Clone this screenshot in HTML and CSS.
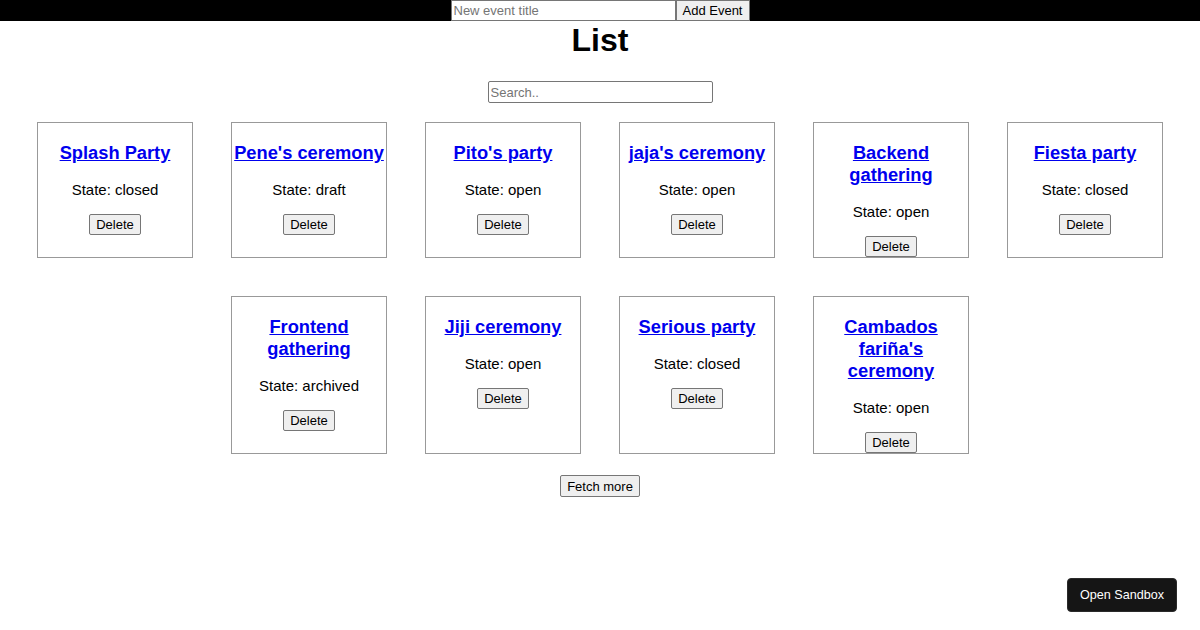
FILE: index.html
```html
<!DOCTYPE html>
<html lang="en">
<head>
<meta charset="utf-8">
<title>List</title>
<link rel="stylesheet" href="styles.css">
</head>
<body>
<div class="topbar">
  <input class="field" type="text" placeholder="New event title">
  <button class="btn">Add Event</button>
</div>
<h1 class="heading">List</h1>
<div class="search-row">
  <input class="field search" type="text" placeholder="Search..">
</div>
<div class="cards">
  <div class="card"><h3 class="title"><a href="#">Splash Party</a></h3><p class="state">State: closed</p><button class="btn del">Delete</button></div>
  <div class="card"><h3 class="title"><a href="#">Pene's ceremony</a></h3><p class="state">State: draft</p><button class="btn del">Delete</button></div>
  <div class="card"><h3 class="title"><a href="#">Pito's party</a></h3><p class="state">State: open</p><button class="btn del">Delete</button></div>
  <div class="card"><h3 class="title"><a href="#">jaja's ceremony</a></h3><p class="state">State: open</p><button class="btn del">Delete</button></div>
  <div class="card"><h3 class="title"><a href="#">Backend gathering</a></h3><p class="state">State: open</p><button class="btn del">Delete</button></div>
  <div class="card"><h3 class="title"><a href="#">Fiesta party</a></h3><p class="state">State: closed</p><button class="btn del">Delete</button></div>
  <div class="card"><h3 class="title"><a href="#">Frontend gathering</a></h3><p class="state">State: archived</p><button class="btn del">Delete</button></div>
  <div class="card"><h3 class="title"><a href="#">Jiji ceremony</a></h3><p class="state">State: open</p><button class="btn del">Delete</button></div>
  <div class="card"><h3 class="title"><a href="#">Serious party</a></h3><p class="state">State: closed</p><button class="btn del">Delete</button></div>
  <div class="card"><h3 class="title"><a href="#">Cambados fariña's ceremony</a></h3><p class="state">State: open</p><button class="btn del">Delete</button></div>
</div>
<div class="more-row">
  <button class="btn more">Fetch more</button>
</div>
<button class="sandbox">Open Sandbox</button>
</body>
</html>
```
FILE: styles.css
```css
html, body {
  margin: 0;
  padding: 0;
  background: #fff;
}
body {
  font-family: "Liberation Sans", Arial, sans-serif;
  color: #000;
}
.topbar {
  background: #000;
  height: 21px;
  display: flex;
  justify-content: center;
  align-items: stretch;
}
.field {
  box-sizing: border-box;
  width: 225px;
  height: 21px;
  margin: 0;
  padding: 1px 2px;
  border: 1px solid #767676;
  background: #fff;
  font-family: "Liberation Sans", Arial, sans-serif;
  font-size: 13px;
  color: #000;
}
.field::placeholder {
  color: #757575;
}
.btn {
  box-sizing: border-box;
  height: 21px;
  margin: 0;
  padding: 1px 6px;
  border: 1px solid #767676;
  border-radius: 2px;
  background: #efefef;
  font-family: "Liberation Sans", Arial, sans-serif;
  font-size: 13px;
  line-height: 15px;
  color: #000;
  white-space: nowrap;
}
.topbar .btn {
  border-radius: 0;
  padding: 1px 6px;
}
.heading {
  margin: 1px 0 22px;
  font-size: 32px;
  line-height: 37px;
  text-align: center;
}
.search-row {
  display: flex;
  justify-content: center;
}
.search-row .search {
  height: 22px;
  border-radius: 2px;
}
.cards {
  display: flex;
  flex-wrap: wrap;
  justify-content: center;
  margin: 0 18px;
}
.card {
  width: 154px;
  margin: 19px;
  border: 1px solid #999;
  display: flex;
  flex-direction: column;
  text-align: center;
}
.title {
  margin: 19px 0 17px;
  padding: 0 1px;
  font-size: 18.3px;
  line-height: 22px;
  font-weight: bold;
}
.title a {
  color: #0000ee;
  text-decoration: underline;
}
.state {
  margin: 0 0 15px;
  font-size: 15px;
  line-height: 18px;
}
.del {
  align-self: center;
}
.more-row {
  display: flex;
  justify-content: center;
  padding-top: 2px;
}
.more {
  height: 22px;
}
.sandbox {
  position: fixed;
  right: 23px;
  bottom: 18px;
  height: 34px;
  padding: 0 12px;
  border: 1px solid #2a2a2a;
  border-radius: 4px;
  background: #151515;
  color: #fff;
  font-family: "Liberation Sans", Arial, sans-serif;
  font-size: 12.6px;
}
```
